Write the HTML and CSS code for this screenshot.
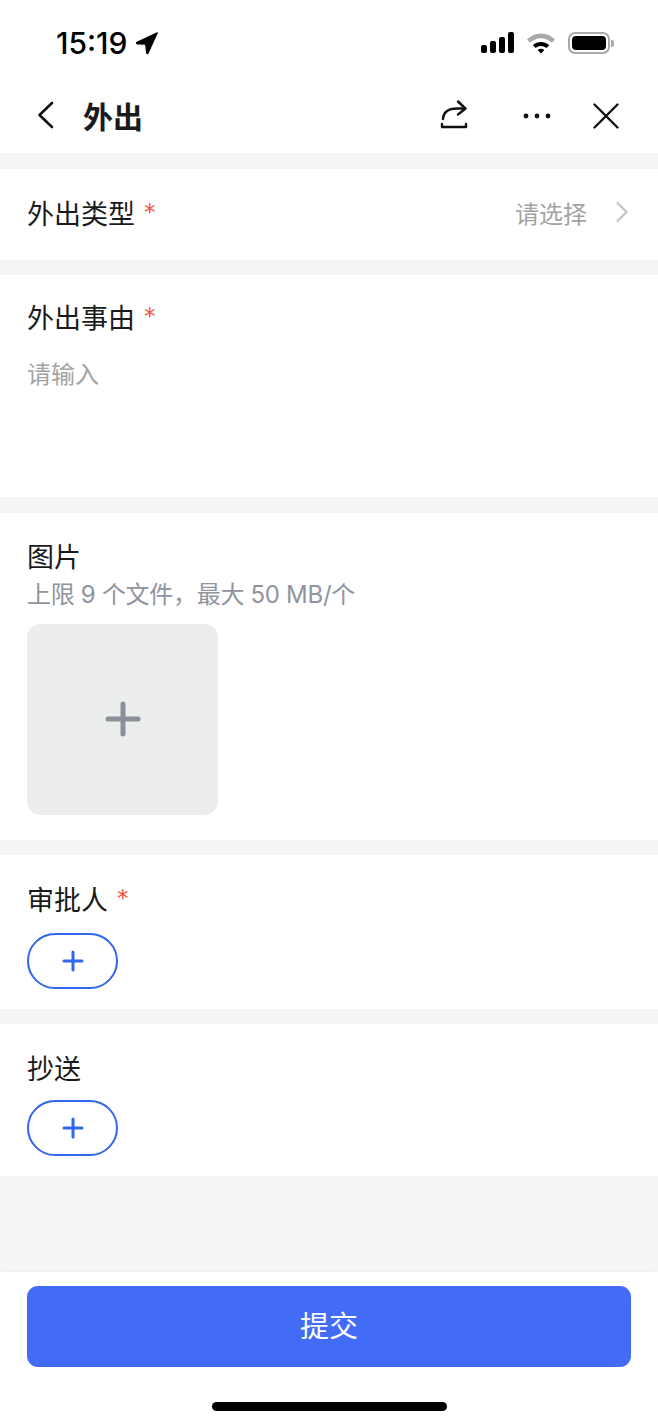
FILE: index.html
```html
<!DOCTYPE html>
<html lang="zh-CN">
<head>
<meta charset="utf-8">
<title>外出</title>
<link rel="stylesheet" href="styles.css">
</head>
<body>
<div class="app">
  <div class="status">
    <div class="status-left">
      <span class="time">15:19</span>
      <svg class="loc" width="24" height="24" viewBox="0 0 24 24"><path d="M22.300 1.800 2 11.300c-.9.400-.6 1.500.3 1.500l8.400.3.900 8.700c.1.900 1.100 1.100 1.500.2z" fill="#000" stroke="#000" stroke-width="1.200" stroke-linejoin="round"/></svg>
    </div>
    <div class="status-right">
      <svg width="34" height="22" viewBox="0 0 34 22"><g fill="#000"><rect x="0" y="13" width="6" height="8" rx="2"/><rect x="9" y="9" width="6" height="12" rx="2"/><rect x="18" y="5" width="6" height="16" rx="2"/><rect x="27" y="0" width="6" height="21" rx="2"/></g></svg>
      <svg class="wifi" width="30" height="22" viewBox="0 0 30 22"><path d="M1 7.500C8.500 -.5 21.500 -.5 29 7.500L25.800 10.800C19.800 4.800 10.200 4.800 4.200 10.800z" fill="#aaa"/><path d="M6.800 13.200C11.500 8.800 18.500 8.800 23.200 13.200l-2.800 2.900C17.200 13.300 12.800 13.300 9.600 16.100z" fill="#000"/><path d="M11.600 18c2-1.700 4.800-1.700 6.800 0L15 21.500z" fill="#000"/></svg>
      <div class="battery"><div class="battery-fill"></div></div>
      <div class="battery-cap"></div>
    </div>
  </div>
  <div class="nav">
    <div class="nav-left">
      <svg width="18" height="28" viewBox="0 0 18 28"><path d="M16 2 3.500 14 16 26" fill="none" stroke="#111" stroke-width="2.600" stroke-linecap="round" stroke-linejoin="round"/></svg>
      <span class="nav-title">外出</span>
    </div>
    <div class="nav-right">
      <svg class="nav-share" width="28" height="32" viewBox="0 0 28 32"><path d="M3 20c.5-7 6-10.500 14-10.500h8" fill="none" stroke="#111" stroke-width="2.400" stroke-linecap="round"/><path d="M18 2.500l7.500 7-7.500 6" fill="none" stroke="#111" stroke-width="2.400" stroke-linecap="round" stroke-linejoin="round"/><path d="M2 25v3h24v-3" fill="none" stroke="#111" stroke-width="2.400" stroke-linecap="round" stroke-linejoin="round"/></svg>
      <svg class="nav-more" width="30" height="8" viewBox="0 0 30 8"><g fill="#111"><circle cx="4" cy="4" r="2.400"/><circle cx="15" cy="4" r="2.400"/><circle cx="26" cy="4" r="2.400"/></g></svg>
      <svg class="nav-close" width="28" height="28" viewBox="0 0 28 28"><path d="M2.500 2.500l23 23M25.500 2.500l-23 23" stroke="#111" stroke-width="2.400" stroke-linecap="round"/></svg>
    </div>
  </div>

  <section class="card card-type">
    <div class="label">外出类型<span class="req">*</span></div>
    <div class="picker">
      <span class="placeholder-big">请选择</span>
      <svg width="14" height="22" viewBox="0 0 14 22"><path d="M2.500 2 11.500 11 2.500 20" fill="none" stroke="#c4c4c4" stroke-width="2.200" stroke-linecap="round" stroke-linejoin="round"/></svg>
    </div>
  </section>

  <section class="card card-reason">
    <div class="label">外出事由<span class="req">*</span></div>
    <div class="placeholder">请输入</div>
  </section>

  <section class="card card-image">
    <div class="label">图片</div>
    <div class="hint">上限 9 个文件，最大 50 MB/个</div>
    <div class="upload">
      <svg width="36" height="36" viewBox="0 0 36 36"><path d="M18 3v30M3 18h30" stroke="#8a8f99" stroke-width="5" stroke-linecap="round"/></svg>
    </div>
  </section>

  <section class="card card-approver">
    <div class="label">审批人<span class="req">*</span></div>
    <div class="add"><svg width="22" height="22" viewBox="0 0 22 22"><path d="M11 2v18M2 11h18" stroke="#3366ee" stroke-width="3" stroke-linecap="round"/></svg></div>
  </section>

  <section class="card card-cc">
    <div class="label">抄送</div>
    <div class="add"><svg width="22" height="22" viewBox="0 0 22 22"><path d="M11 2v18M2 11h18" stroke="#3366ee" stroke-width="3" stroke-linecap="round"/></svg></div>
  </section>

  <div class="spacer"></div>

  <footer class="footer">
    <div class="submit">提交</div>
    <div class="home"></div>
  </footer>
</div>
</body>
</html>
```
FILE: styles.css
```css
* { box-sizing: border-box; }
html, body { margin: 0; padding: 0; }
body { font-family: "Liberation Sans", "Noto Sans CJK SC", sans-serif; color: #1a1a1a; background: #f5f5f5; }
.app { width: 658px; height: 1424px; display: flex; flex-direction: column; overflow: hidden; background: #f5f5f5; }

.status { height: 80px; background: #fff; display: flex; justify-content: space-between; align-items: flex-start; padding: 27px 44px 0 56px; flex: none; }
.status-left { display: flex; align-items: center; gap: 8px; height: 32px; }
.time { font-family: Inter, "Liberation Sans", sans-serif; font-size: 30px; font-weight: 500; letter-spacing: 0; color: #000; line-height: 32px; }
.status-right { display: flex; align-items: center; height: 32px; }
.wifi { margin-left: 11px; }
.battery { margin-left: 12px; width: 42px; height: 22px; border: 2px solid #aaa; border-radius: 7px; padding: 2px; }
.battery-fill { width: 100%; height: 100%; background: #000; border-radius: 4px; }
.battery-cap { width: 3px; height: 7px; margin-left: 1px; background: #aaa; border-radius: 0 2px 2px 0; }

.nav { height: 73px; background: #fff; display: flex; justify-content: space-between; align-items: center; padding: 0 38px 3px 36px; flex: none; }
.nav-left { display: flex; align-items: center; gap: 29px; }
.nav-title { font-size: 30px; font-weight: 700; color: #1a1a1a; }
.nav-right { display: flex; align-items: center; }
.nav-more { margin-left: 54px; margin-top: 2px; }
.nav-close { margin-left: 40px; margin-top: 2px; }

.card { background: #fff; padding: 0 27px; flex: none; }
.label { font-size: 27px; line-height: 32px; color: #1a1a1a; display: flex; }
.req { font-family: "DejaVu Sans", sans-serif; color: #f0503c; font-size: 23px; margin-left: 9px; line-height: 26px; }

.card-type { margin-top: 16px; height: 91px; display: flex; justify-content: space-between; align-items: center; padding-right: 29px; }
.card-type .label { margin-top: 1px; }
.picker { display: flex; align-items: center; gap: 28px; margin-top: -5px; }
.placeholder-big { font-size: 24px; color: #a3a3a3; }

.card-reason { margin-top: 15px; height: 222px; padding-top: 28px; }
.placeholder { font-size: 24px; line-height: 32px; color: #a3a3a3; margin-top: 24px; }

.card-image { margin-top: 16px; height: 327px; padding-top: 29px; }
.hint { font-family: Inter, "Liberation Sans", "Noto Sans CJK SC", sans-serif; font-size: 24px; line-height: 30px; letter-spacing: -0.3px; color: #8f949e; margin-top: 6px; }
.upload { width: 191px; height: 191px; margin-top: 14px; background: #eceeee; border-radius: 14px; display: flex; align-items: center; justify-content: center; padding-bottom: 2px; }

.card-approver { margin-top: 15px; height: 154px; padding-top: 30px; }
.card-cc { margin-top: 15px; height: 152px; padding-top: 30px; }
.add { width: 91px; height: 56px; margin-top: 16px; border: 2px solid #3366ee; border-radius: 28px; display: flex; align-items: center; justify-content: center; }
.card-cc .add { margin-top: 14px; }

.spacer { flex: 1; }

.footer { height: 152px; background: #fff; flex: none; padding: 14px 27px 0; display: flex; flex-direction: column; align-items: center; box-shadow: 0 -1px 3px rgba(0,0,0,0.03); }
.submit { width: 604px; height: 81px; background: #436cf6; border-radius: 11px; color: #fff; font-size: 29px; display: flex; align-items: center; justify-content: center; padding-bottom: 5px; }
.home { width: 235px; height: 9px; background: #000; border-radius: 5px; margin-top: 35px; }
```
